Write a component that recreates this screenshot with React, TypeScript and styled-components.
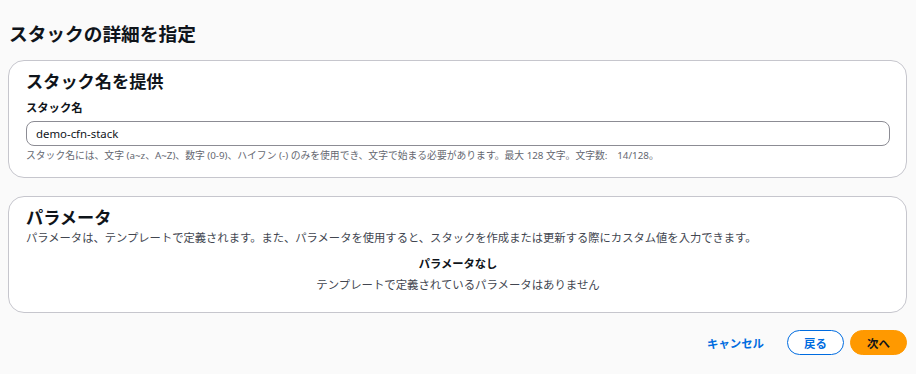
import React from 'react';
import styled, { createGlobalStyle } from 'styled-components';

const GlobalStyle = createGlobalStyle`
  html, body {
    margin: 0;
    padding: 0;
    background: #fafafa;
    font-family: "Noto Sans", "Noto Sans CJK JP", sans-serif;
    color: #0f141a;
  }
`;

const Page = styled.main`
  padding: 20px 9px 0 8px;
  width: 899px;
`;

const Title = styled.h1`
  margin: 0 0 13px 1px;
  font-size: 18.7px;
  line-height: 27px;
  font-weight: 700;
`;

const Container = styled.section`
  background: #ffffff;
  border: 1px solid #c6c6cd;
  border-radius: 16px;
  padding: 10px 16px 14px 17px;
  margin-bottom: 18px;
`;

const Heading = styled.h2`
  margin: 0;
  font-size: 17.2px;
  line-height: 22px;
  font-weight: 700;
`;

const Description = styled.p`
  margin: 0;
  font-size: 11.3px;
  line-height: 18px;
  color: #424650;
`;

const Field = styled.div`
  margin-top: 7px;
`;

const Label = styled.label`
  display: block;
  font-size: 11.3px;
  line-height: 16px;
  font-weight: 700;
  margin-bottom: 5px;
`;

const Input = styled.input`
  box-sizing: border-box;
  width: 100%;
  height: 25px;
  padding: 0 9px;
  border: 1px solid #8c8c94;
  border-radius: 8px;
  font-family: inherit;
  font-size: 11.4px;
  color: #0f141a;
  background: #fff;
  outline: none;
`;

const Hint = styled.div`
  margin-top: 3px;
  font-size: 9.8px;
  line-height: 14px;
  color: #656871;
`;

const Empty = styled.div`
  text-align: center;
  padding: 8px 0 4px;
`;

const EmptyTitle = styled.div`
  font-size: 11.3px;
  line-height: 18px;
  font-weight: 700;
`;

const EmptyText = styled.div`
  margin-top: 3px;
  font-size: 11.4px;
  line-height: 18px;
  color: #424650;
`;

const Actions = styled.div`
  display: flex;
  justify-content: flex-end;
  align-items: center;
  gap: 6px;
  margin-top: -1px;
`;

const LinkButton = styled.button`
  background: none;
  border: none;
  padding: 0 17px 0 0;
  font-family: inherit;
  font-size: 11.4px;
  font-weight: 700;
  color: #006ce0;
  cursor: pointer;
`;

const Button = styled.button<{ $primary?: boolean }>`
  box-sizing: border-box;
  height: 25px;
  width: 57px;
  border-radius: 13px;
  border: ${p => (p.$primary ? '1px solid #ff9900' : '1.5px solid #006ce0')};
  background: ${p => (p.$primary ? '#ff9900' : '#ffffff')};
  color: ${p => (p.$primary ? '#0f141a' : '#006ce0')};
  font-family: inherit;
  font-size: 11.4px;
  font-weight: 700;
  cursor: pointer;
`;

export default function App() {
  const value = 'demo-cfn-stack';
  return (
    <>
      <GlobalStyle />
      <Page>
        <Title>スタックの詳細を指定</Title>
        <Container>
          <Heading>スタック名を提供</Heading>
          <Field>
            <Label>スタック名</Label>
            <Input defaultValue={value} />
            <Hint>
              スタック名には、文字 (a~z、A~Z)、数字 (0-9)、ハイフン (-) のみを使用でき、文字で始まる必要があります。最大 128 文字。文字数:　{value.length}/128。
            </Hint>
          </Field>
        </Container>
        <Container>
          <Heading>パラメータ</Heading>
          <Description>
            パラメータは、テンプレートで定義されます。また、パラメータを使用すると、スタックを作成または更新する際にカスタム値を入力できます。
          </Description>
          <Empty>
            <EmptyTitle>パラメータなし</EmptyTitle>
            <EmptyText>テンプレートで定義されているパラメータはありません</EmptyText>
          </Empty>
        </Container>
        <Actions>
          <LinkButton>キャンセル</LinkButton>
          <Button>戻る</Button>
          <Button $primary>次へ</Button>
        </Actions>
      </Page>
    </>
  );
}
